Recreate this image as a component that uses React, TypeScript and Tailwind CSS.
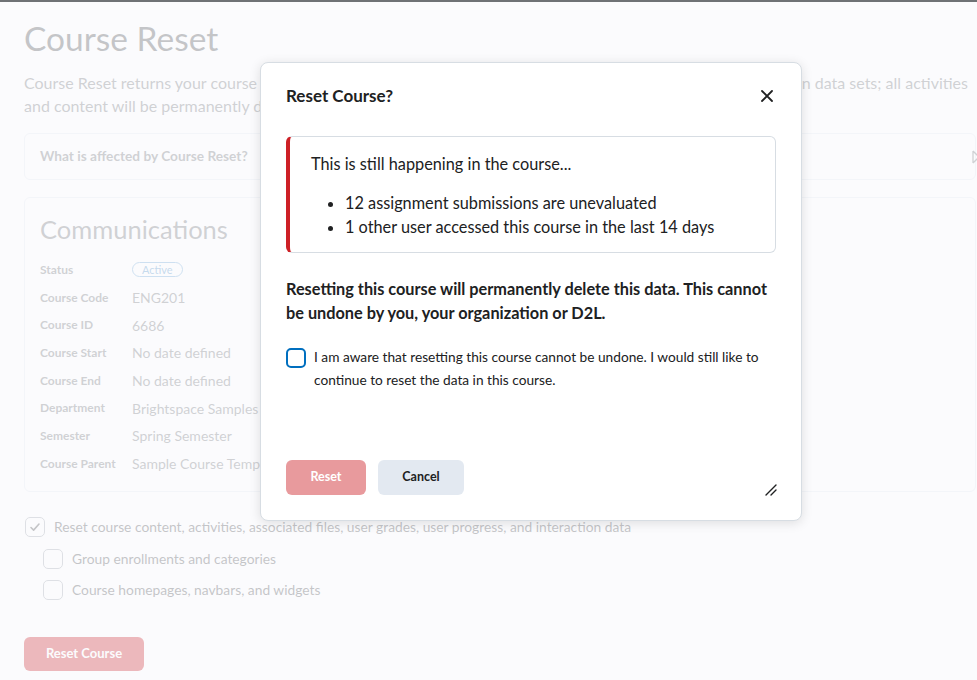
import React from "react";

const details = [
  { label: "Course Code", value: "ENG201" },
  { label: "Course ID", value: "6686" },
  { label: "Course Start", value: "No date defined" },
  { label: "Course End", value: "No date defined" },
  { label: "Department", value: "Brightspace Samples" },
  { label: "Semester", value: "Spring Semester" },
  { label: "Course Parent", value: "Sample Course Template" },
];

const Checkbox = ({ checked }: { checked?: boolean }) => (
  <span className="flex h-[20px] w-[20px] shrink-0 items-center justify-center rounded-[5px] border border-[#9ea6ad] bg-white">
    {checked && (
      <svg width="12" height="12" viewBox="0 0 12 12" fill="none">
        <path d="M2 6.5l2.6 2.6L10 3" stroke="#494c4e" strokeWidth="1.6" strokeLinecap="round" strokeLinejoin="round" />
      </svg>
    )}
  </span>
);

const App = () => {
  return (
    <div className="relative h-[680px] w-[977px] overflow-hidden bg-white font-['Lato','Noto_Sans',sans-serif] text-[#202122]">
      {/* Page behind the dialog */}
      <div className="w-[1000px] px-6 pt-[18px]">
        <h1 className="text-[33.5px] leading-[40px] text-[#494c4e]">Course Reset</h1>
        <p className="mt-[13px] text-[16px] leading-[23px] text-[#6e7376]">
          Course Reset returns your course to its initial state by removing content, user progress, grades and all interaction data sets; all activities
          <br />
          and content will be permanently deleted.
        </p>

        {/* Accordion */}
        <div className="relative mt-[16px] flex h-[47px] items-center rounded-md border border-[#e3e9f1] pl-[15px]">
          <span className="text-[13.7px] font-bold text-[#6e7376]">What is affected by Course Reset?</span>
          <svg className="absolute left-[947px] top-[16px]" width="10" height="14" viewBox="0 0 10 14" fill="none">
            <path d="M1 1v12M1 1l6 6-6 6" stroke="#6e7376" strokeWidth="1.3" />
          </svg>
        </div>

        {/* Course card */}
        <div className="mt-[17px] h-[295px] rounded-md border border-[#e3e9f1] pl-[15px] pt-[15px]">
          <h2 className="text-[25.5px] leading-[32px] text-[#6e7376]">Communications</h2>
          <div className="mt-[11px] grid grid-cols-[92px_1fr]">
            <div className="flex h-[27.7px] items-center text-[12px] font-bold text-[#6e7376]">Status</div>
            <div className="flex h-[27.7px] items-center">
              <span className="rounded-full border border-[#6aa6d6] px-[9px] text-[11px] leading-[13px] text-[#4d8fc8]">Active</span>
            </div>
            {details.map((d) => (
              <React.Fragment key={d.label}>
                <div className="flex h-[27.7px] items-center text-[12px] font-bold text-[#6e7376]">{d.label}</div>
                <div className="flex h-[27.7px] items-center text-[14px] text-[#6e7376]">{d.value}</div>
              </React.Fragment>
            ))}
          </div>
        </div>

        {/* Reset options */}
        <div className="mt-[25px] flex flex-col gap-[11.5px] text-[13.8px] leading-[20px] text-[#494c4e]">
          <label className="flex items-center gap-[9px] pl-px">
            <Checkbox checked />
            Reset course content, activities, associated files, user grades, user progress, and interaction data
          </label>
          <label className="ml-[19px] flex items-center gap-[9px]">
            <Checkbox />
            Group enrollments and categories
          </label>
          <label className="ml-[19px] flex items-center gap-[9px]">
            <Checkbox />
            Course homepages, navbars, and widgets
          </label>
        </div>

        <button className="mt-[37px] h-[34px] w-[120px] rounded-md bg-[#cd2026] text-[13px] font-bold text-white">
          Reset Course
        </button>
      </div>

      {/* Backdrop */}
      <div className="absolute inset-0 bg-[#f9fafc]/[0.7]" />
      <div className="absolute left-0 right-0 top-0 h-[2px] bg-[#6f7275]" />

      {/* Dialog */}
      <div className="absolute left-[260px] top-[62px] flex h-[459px] w-[542px] flex-col rounded-lg border border-[#d7dde3] bg-white px-[25px] shadow-[0_2px_12px_rgba(0,0,0,0.12)]">
        <div className="flex items-center justify-between pt-[21px]">
          <h3 className="text-[17px] font-bold leading-[24px]">Reset Course?</h3>
          <svg className="mr-[3px]" width="12" height="12" viewBox="0 0 12 12" fill="none">
            <path d="M1 1l10 10M11 1L1 11" stroke="#202122" strokeWidth="1.8" strokeLinecap="round" />
          </svg>
        </div>

        <div className="mt-[28px] rounded-md border border-l-4 border-[#d7dde3] border-l-[#cd2026] pb-[13px] pl-[21px] pt-[15px]">
          <p className="text-[16.3px] leading-[24px]">This is still happening in the course...</p>
          <ul className="mt-[15px] list-disc pl-[34px] text-[16.3px] leading-[24px]">
            <li>12 assignment submissions are unevaluated</li>
            <li>1 other user accessed this course in the last 14 days</li>
          </ul>
        </div>

        <p className="mt-[24px] text-[16.3px] font-bold leading-[24px]">
          Resetting this course will permanently delete this data. This cannot be undone by you, your organization or D2L.
        </p>

        <label className="mt-[20px] flex items-start gap-[8px] text-[13.7px] leading-[23px]">
          <span className="mt-[3px] h-[20px] w-[20px] shrink-0 rounded-[5px] border-2 border-[#006fbf]" />
          <span>
            I am aware that resetting this course cannot be undone. I would still like to continue to reset the data in this course.
          </span>
        </label>

        <div className="mt-auto flex gap-[12px] pb-[25px]">
          <button className="h-[35px] w-[80px] rounded-md bg-[#e89a9d] text-[12.5px] font-bold text-white">Reset</button>
          <button className="h-[35px] w-[86px] rounded-md bg-[#e3e9f1] text-[12.5px] font-bold text-[#202122]">Cancel</button>
        </div>

        <svg className="absolute bottom-[24px] right-[24px]" width="12" height="12" viewBox="0 0 12 12" fill="none">
          <path d="M1 11L11 1M6 11l5-5" stroke="#202122" strokeWidth="1.4" strokeLinecap="round" />
        </svg>
      </div>
    </div>
  );
};

export default App;
